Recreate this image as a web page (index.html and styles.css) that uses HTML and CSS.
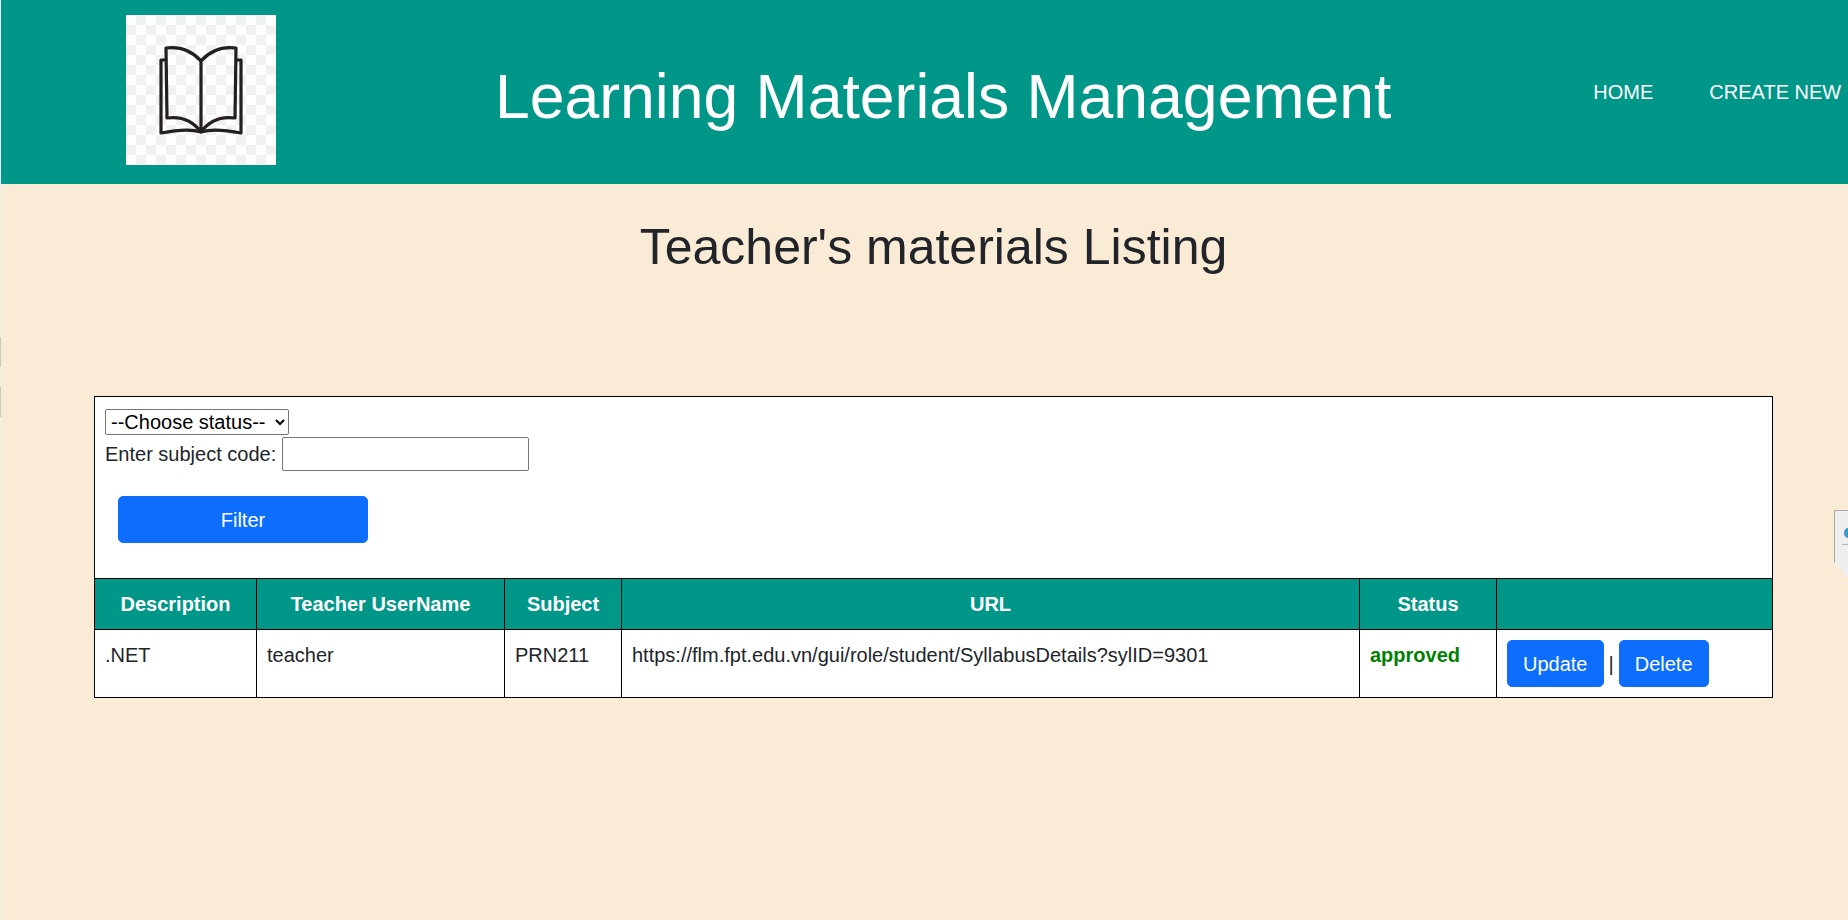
FILE: index.html
```html
<!DOCTYPE html>
<html lang="en">
<head>
  <meta charset="UTF-8">
  <meta name="viewport" content="width=device-width, initial-scale=1.0">
  <title>Learning Materials Management</title>
  <link rel="stylesheet" href="styles.css">
</head>
<body>

  <header class="site-header">
    <div class="logo">
      <svg width="150" height="150" viewBox="0 0 150 150" fill="none" stroke="#231f20" stroke-width="3.2" stroke-linejoin="round">
        <path d="M75 46C67 37 55 31 40 33L41 103C55 101 67 106 75 117C83 106 95 101 109 103L110 33C95 31 83 37 75 46V117"/>
        <path d="M40 45H35V118C50 115 66 114 75 117C84 114 100 115 115 118V45H110"/>
      </svg>
    </div>
    <h1 class="site-title">Learning Materials Management</h1>
    <nav class="site-nav">
      <a href="#">HOME</a>
      <a href="#">CREATE NEW</a>
    </nav>
  </header>

  <main>
    <h2 class="page-title">Teacher's materials Listing</h2>

    <table class="materials">
      <colgroup>
        <col class="col-desc">
        <col class="col-teacher">
        <col class="col-subject">
        <col class="col-url">
        <col class="col-status">
        <col class="col-actions">
      </colgroup>
      <tr>
        <td colspan="6" class="filter-cell">
          <form>
            <select class="status-select">
              <option>--Choose status--</option>
            </select>
            <div class="subject-row">
              <label for="subjectCode">Enter subject code:</label>
              <input type="text" id="subjectCode" class="subject-input">
            </div>
            <button type="submit" class="btn btn-filter">Filter</button>
          </form>
        </td>
      </tr>
      <tr>
        <th>Description</th>
        <th>Teacher UserName</th>
        <th>Subject</th>
        <th>URL</th>
        <th>Status</th>
        <th></th>
      </tr>
      <tr>
        <td>.NET</td>
        <td>teacher</td>
        <td>PRN211</td>
        <td>https://flm.fpt.edu.vn/gui/role/student/SyllabusDetails?sylID=9301</td>
        <td class="status-approved">approved</td>
        <td>
          <div class="actions">
            <a href="#" class="btn">Update</a>
            <span class="sep">|</span>
            <a href="#" class="btn">Delete</a>
          </div>
        </td>
      </tr>
    </table>
  </main>

  <div class="edge-tick edge-tick-one"></div>
  <div class="edge-tick edge-tick-two"></div>
  <div class="side-tab"><span class="side-dot"></span><span class="side-line"></span></div>

</body>
</html>
```

FILE: styles.css
```css
* {
  box-sizing: border-box;
}

html {
  height: 100%;
}

body {
  font-family: "Liberation Sans", Arial, sans-serif;
  font-size: 20px;
  line-height: 1.5;
  color: #212529;
  background-color: #faebd7;
  border-left: 1px solid #f0f0f0;
  min-height: 100%;
  margin: 0;
  overflow: hidden;
}

.site-header {
  display: flex;
  align-items: center;
  height: 184px;
  background-color: #009688;
  color: white;
  padding-left: 125px;
}

.logo {
  width: 150px;
  height: 150px;
  flex-shrink: 0;
  margin-bottom: 4px;
  background-color: #fff;
  background-image: conic-gradient(#f1f1f1 25%, transparent 0 50%, #f1f1f1 0 75%, transparent 0);
  background-size: 20px 20px;
}

.logo svg {
  display: block;
}

.site-title {
  font-size: 62.5px;
  font-weight: 400;
  line-height: 1.2;
  margin: 8px 0 0 219px;
  white-space: nowrap;
}

.site-nav {
  display: flex;
  gap: 56px;
  margin-left: 202px;
  white-space: nowrap;
}

.site-nav a {
  color: white;
  text-decoration: none;
}

.page-title {
  font-size: 50px;
  font-weight: 400;
  line-height: 1.2;
  text-align: center;
  margin: 33px 0 0;
  padding-left: 18px;
}

.materials {
  width: 1678px;
  margin: 119px 0 0 93px;
  table-layout: fixed;
  border-collapse: collapse;
  background-color: white;
}

.col-desc { width: 162px; }
.col-teacher { width: 248px; }
.col-subject { width: 117px; }
.col-url { width: 738px; }
.col-status { width: 137px; }
.col-actions { width: 276px; }

.materials th,
.materials td {
  border: 1px solid black;
  padding: 10px;
  vertical-align: top;
}

.materials th {
  background-color: #009688;
  color: white;
  text-align: center;
  height: 51px;
  line-height: 30px;
  border-bottom: none;
}

.materials .filter-cell {
  height: 182px;
  padding: 12px 10px 0;
}

.status-select {
  display: block;
  width: 184px;
  height: 26px;
  font-family: inherit;
  font-size: 20px;
  color: black;
  background-color: white;
  border: 1px solid #767676;
  border-radius: 2px;
  padding: 0 0 0 1px;
}

.subject-row {
  display: flex;
  align-items: center;
  gap: 6px;
  margin-top: 2px;
}

.subject-input {
  width: 247px;
  height: 34px;
  border: 1px solid #767676;
  border-radius: 2px;
  background-color: white;
}

.btn {
  display: inline-block;
  font-family: inherit;
  font-size: 20px;
  line-height: 30px;
  color: white;
  text-decoration: none;
  text-align: center;
  background-color: #0d6efd;
  border: 1px solid #0d6efd;
  border-radius: 5px;
  padding: 7.5px 15px;
}

.btn-filter {
  display: block;
  width: 250px;
  margin: 25px 0 0 13px;
}

.status-approved {
  color: green;
  font-weight: bold;
}

.actions {
  display: flex;
  align-items: center;
  gap: 5px;
}

.sep {
  line-height: 1;
}

.edge-tick {
  position: absolute;
  left: 0;
  width: 1px;
  height: 30px;
  background-color: #c8c8c8;
}

.edge-tick-one {
  top: 337px;
}

.edge-tick-two {
  top: 387px;
}

.side-tab {
  position: absolute;
  top: 510px;
  right: 0;
  width: 14px;
  height: 68px;
  background-color: #efefef;
  border-top: 1px solid #a9a9a9;
  border-left: 1px solid #a9a9a9;
  clip-path: polygon(0 0, 100% 0, 100% 100%, 0 76%);
}

.side-dot {
  position: absolute;
  top: 17px;
  left: 9px;
  width: 8px;
  height: 10px;
  border-radius: 50%;
  background-color: #3d97c9;
}

.side-line {
  position: absolute;
  top: 33px;
  left: 7px;
  width: 8px;
  height: 1px;
  background-color: #b5b5b5;
}
```
